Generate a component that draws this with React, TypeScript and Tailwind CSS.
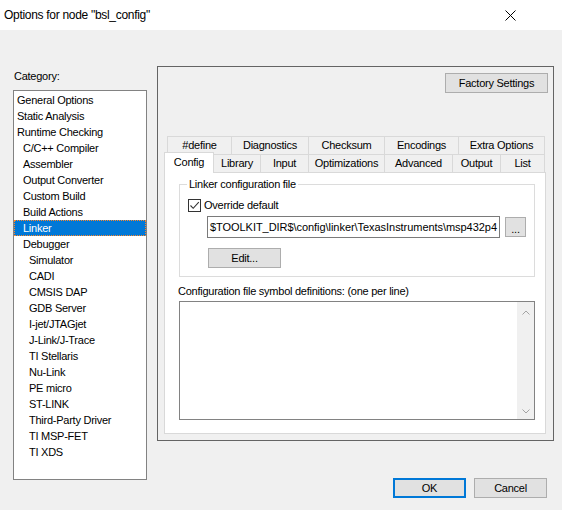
import React from 'react';

type Category = { name: string; level: 0 | 1 | 2 };

// Category tree shown in the left list box
const CATEGORIES: Category[] = [
  { name: 'General Options', level: 0 },
  { name: 'Static Analysis', level: 0 },
  { name: 'Runtime Checking', level: 0 },
  { name: 'C/C++ Compiler', level: 1 },
  { name: 'Assembler', level: 1 },
  { name: 'Output Converter', level: 1 },
  { name: 'Custom Build', level: 1 },
  { name: 'Build Actions', level: 1 },
  { name: 'Linker', level: 1 },
  { name: 'Debugger', level: 1 },
  { name: 'Simulator', level: 2 },
  { name: 'CADI', level: 2 },
  { name: 'CMSIS DAP', level: 2 },
  { name: 'GDB Server', level: 2 },
  { name: 'I-jet/JTAGjet', level: 2 },
  { name: 'J-Link/J-Trace', level: 2 },
  { name: 'TI Stellaris', level: 2 },
  { name: 'Nu-Link', level: 2 },
  { name: 'PE micro', level: 2 },
  { name: 'ST-LINK', level: 2 },
  { name: 'Third-Party Driver', level: 2 },
  { name: 'TI MSP-FET', level: 2 },
  { name: 'TI XDS', level: 2 },
];

const INDENT = ['pl-[2px]', 'pl-[8px]', 'pl-[14px]'];

const BACK_TABS = [
  { label: '#define', w: 'w-[64px]' },
  { label: 'Diagnostics', w: 'w-[77px]' },
  { label: 'Checksum', w: 'w-[76px]' },
  { label: 'Encodings', w: 'w-[74px]' },
  { label: 'Extra Options', w: 'w-[87px]' },
];

const FRONT_TABS = [
  { label: 'Config', w: 'w-[50px]' },
  { label: 'Library', w: 'w-[46px]' },
  { label: 'Input', w: 'w-[48px]' },
  { label: 'Optimizations', w: 'w-[76px]' },
  { label: 'Advanced', w: 'w-[68px]' },
  { label: 'Output', w: 'w-[48px]' },
  { label: 'List', w: 'w-[45px]' },
];

const SELECTED_CATEGORY = 'Linker';
const SELECTED_TAB = 'Config';

const App: React.FC = () => {
  return (
    <div className="w-[562px] h-[510px] bg-[#f0f0f0] flex flex-col text-black font-['Liberation_Sans',Arial,sans-serif] text-[11px] tracking-[-0.25px] overflow-hidden select-none">
      {/* Title bar */}
      <div className="h-[30px] shrink-0 bg-white flex items-center justify-between pl-[4px] pr-[46px]">
        <span className="text-[12px] tracking-[-0.3px]">Options for node "bsl_config"</span>
        <svg width="11" height="11" viewBox="0 0 11 11">
          <path d="M0.5 0.5 L10.5 10.5 M10.5 0.5 L0.5 10.5" stroke="#000" strokeWidth="1" fill="none" />
        </svg>
      </div>

      <div className="flex flex-1 pl-[13px]">
        {/* Category list */}
        <div className="w-[134px] flex flex-col pt-[39px]">
          <div className="h-[14px] leading-[14px] pl-px">Category:</div>
          <div className="mt-[7px] h-[390px] bg-white border border-[#828282] pt-px">
            {CATEGORIES.map(c => (
              <div
                key={c.name}
                className={`h-[16px] leading-[14px] whitespace-nowrap ${INDENT[c.level]} ${
                  c.name === SELECTED_CATEGORY
                    ? 'bg-[#0078d7] text-white border border-dotted border-[#ff8728]'
                    : 'border border-transparent'
                }`}
              >
                {c.name}
              </div>
            ))}
          </div>
        </div>

        {/* Right side */}
        <div className="ml-[10px] flex flex-col pt-[36px]">
          <div className="w-[397px] h-[375px] border border-[#646464] flex flex-col">
            <button className="self-end mr-[5px] mt-[6px] w-[103px] h-[20px] bg-[#e1e1e1] border border-[#adadad] leading-[18px]">
              Factory Settings
            </button>

            {/* Tab control */}
            <div className="mt-[43px] ml-[6px] w-[382px] flex flex-col">
              <div className="h-[18px] ml-[3px] flex">
                {BACK_TABS.map((t, i) => (
                  <div
                    key={t.label}
                    className={`${t.w} h-full border-t border-l border-[#d9d9d9] bg-[#f0f0f0] flex items-center justify-center whitespace-nowrap ${
                      i === BACK_TABS.length - 1 ? 'border-r' : ''
                    }`}
                  >
                    {t.label}
                  </div>
                ))}
              </div>
              <div className="h-[18px] flex items-end">
                {FRONT_TABS.map((t, i) => {
                  const sel = t.label === SELECTED_TAB;
                  const afterSel = i > 0 && FRONT_TABS[i - 1].label === SELECTED_TAB;
                  return sel ? (
                    <div
                      key={t.label}
                      className={`${t.w} h-[21px] -mb-px relative z-10 bg-white border-t border-l border-r border-[#d9d9d9] flex items-center justify-center pb-[2px] whitespace-nowrap`}
                    >
                      {t.label}
                    </div>
                  ) : (
                    <div
                      key={t.label}
                      className={`${t.w} h-full border-t border-[#d9d9d9] bg-[#f0f0f0] flex items-center justify-center whitespace-nowrap ${
                        afterSel ? '' : 'border-l'
                      } ${i === FRONT_TABS.length - 1 ? 'border-r' : ''}`}
                    >
                      {t.label}
                    </div>
                  );
                })}
              </div>

              {/* Tab page */}
              <div className="h-[262px] bg-white border border-[#d9d9d9] flex flex-col pt-[5px]">
                <fieldset className="ml-[14px] w-[356px] border border-[#dcdcdc] pb-[8px]">
                  <legend className="ml-[7px] px-[2px] leading-[13px]">Linker configuration file</legend>
                  <div className="mt-[7px] ml-[8px] h-[14px] flex items-center">
                    <div className="w-[13px] h-[13px] border border-[#333333] bg-white flex items-center justify-center">
                      <svg width="11" height="11" viewBox="0 0 11 11">
                        <path d="M1.5 5.5 L4.2 8.3 L9.8 2.2" stroke="#333" strokeWidth="1.1" fill="none" />
                      </svg>
                    </div>
                    <span className="ml-[3px]">Override default</span>
                  </div>
                  <div className="mt-[4px] ml-[27px] flex items-start">
                    <div className="w-[293px] h-[22px] border border-[#7a7a7a] bg-white overflow-hidden whitespace-nowrap pl-[2px] leading-[20px] text-[11px] tracking-[-0.05px]">
                      $TOOLKIT_DIR$\config\linker\TexasInstruments\msp432p4
                    </div>
                    <button className="ml-[5px] mt-px w-[21px] h-[20px] bg-[#e1e1e1] border border-[#adadad] leading-[18px] pt-[2px]">
                      ...
                    </button>
                  </div>
                  <button className="mt-[10px] ml-[28px] w-[73px] h-[20px] bg-[#e1e1e1] border border-[#adadad] leading-[18px]">
                    Edit...
                  </button>
                </fieldset>

                <div className="mt-[7px] ml-[13px] h-[14px] leading-[14px]">
                  Configuration file symbol definitions: (one per line)
                </div>
                <div className="mt-[3px] ml-[14px] w-[356px] h-[119px] border border-[#828282] bg-white flex justify-end">
                  <div className="w-[17px] h-full bg-[#f0f0f0] flex flex-col items-center justify-between pt-[8px] pb-[5px]">
                    <svg width="8" height="5" viewBox="0 0 8 5">
                      <path d="M0.5 4.5 L4 1 L7.5 4.5" stroke="#a3a3a3" strokeWidth="1" fill="none" />
                    </svg>
                    <svg width="8" height="5" viewBox="0 0 8 5">
                      <path d="M0.5 0.5 L4 4 L7.5 0.5" stroke="#a3a3a3" strokeWidth="1" fill="none" />
                    </svg>
                  </div>
                </div>
              </div>
            </div>
          </div>

          {/* Dialog buttons */}
          <div className="mt-[37px] pr-[7px] flex justify-end gap-[8px]">
            <button className="w-[73px] h-[20px] bg-[#e1e1e1] border-2 border-[#0078d7] leading-[16px]">OK</button>
            <button className="w-[73px] h-[20px] bg-[#e1e1e1] border border-[#adadad] leading-[18px]">Cancel</button>
          </div>
        </div>
      </div>
    </div>
  );
};

export default App;
